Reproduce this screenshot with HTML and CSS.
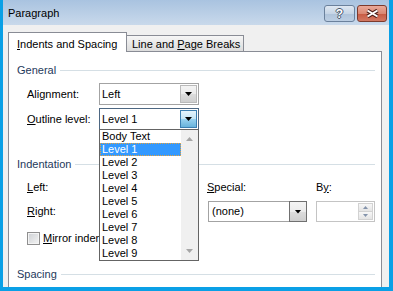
FILE: index.html
```html
<!DOCTYPE html>
<html lang="en">
<head>
  <meta charset="UTF-8">
  <title>Paragraph</title>
  <link rel="stylesheet" href="styles.css">
</head>
<body>
  <div class="window">
    <div class="titlebar">
      <div class="title">Paragraph</div>
      <div class="caption-buttons">
        <div class="cap-btn help">?</div>
        <div class="cap-btn close">
          <svg width="15" height="9" viewBox="0 0 15 9">
            <path d="M2.5 1.5L12.5 7.5M12.5 1.5L2.5 7.5" stroke="#4b1d16" stroke-width="4" fill="none"/>
            <path d="M2.5 1.5L12.5 7.5M12.5 1.5L2.5 7.5" stroke="#fff" stroke-width="2" fill="none"/>
          </svg>
        </div>
      </div>
    </div>

    <div class="client">
      <div class="tabs">
        <div class="tab active"><u>I</u>ndents and Spacing</div>
        <div class="tab inactive">Line and <u>P</u>age Breaks</div>
      </div>

      <div class="panel">
        <div class="group-head">General</div>

        <div class="field-row first">
          <div class="field-label">Ali<u>g</u>nment:</div>
          <div class="combo">
            <span class="combo-text">Left</span>
            <span class="combo-btn"><i class="tri"></i></span>
          </div>
        </div>

        <div class="field-row">
          <div class="field-label"><u>O</u>utline level:</div>
          <div class="combo focused open">
            <span class="combo-text">Level 1</span>
            <span class="combo-btn"><i class="tri"></i></span>
            <ul class="dropdown">
              <li>Body Text</li>
              <li class="selected">Level 1</li>
              <li>Level 2</li>
              <li>Level 3</li>
              <li>Level 4</li>
              <li>Level 5</li>
              <li>Level 6</li>
              <li>Level 7</li>
              <li>Level 8</li>
              <li>Level 9</li>
              <div class="scrollbar">
                <span class="arrow up"></span>
                <span class="arrow down"></span>
              </div>
            </ul>
          </div>
        </div>

        <div class="group-head indent-head">Indentation</div>

        <div class="indent-grid">
          <div class="lbl"><u>L</u>eft:</div>
          <div class="lbl"><u>S</u>pecial:</div>
          <div class="lbl">B<u>y</u>:</div>
          <div class="lbl"><u>R</u>ight:</div>
          <div class="combo special-combo">
            <span class="combo-text">(none)</span>
            <span class="combo-btn"><i class="tri"></i></span>
          </div>
          <div class="spinner">
            <div class="spin">
              <span><i class="spin-up"></i></span>
              <span><i class="spin-down"></i></span>
            </div>
          </div>
        </div>

        <div class="check-row">
          <span class="checkbox"></span>
          <span><u>M</u>irror indents</span>
        </div>

        <div class="group-head spacing-head">Spacing</div>
      </div>
    </div>
  </div>
</body>
</html>
```

FILE: styles.css
```css
body {
  margin: 0;
  width: 393px;
  height: 291px;
  overflow: hidden;
  background-color: #0aa0e6;
  font-family: "Liberation Sans", Arial, sans-serif;
  font-size: 11px;
  color: #000;
}

.window {
  margin: 0 4px 0 3px;
  height: 287px;
  background-color: #f0f0f0;
  overflow: hidden;
}

/* barra de titulo */
.titlebar {
  height: 25px;
  display: flex;
  align-items: flex-start;
  background: linear-gradient(#a9c3e0, #c9d9eb);
}

.title {
  flex: 1;
  padding: 7px 0 0 5px;
  line-height: 13px;
}

.caption-buttons {
  display: flex;
  gap: 2px;
  margin: 5px 2px 0 0;
}

.cap-btn {
  height: 17px;
  box-sizing: border-box;
  border-radius: 3px;
  display: flex;
  align-items: center;
  justify-content: center;
}

.help {
  width: 31px;
  border: 1px solid #6b819c;
  background: linear-gradient(#dfe8f2, #c6d5e6 50%, #afc3da 51%, #bccee3);
  color: #fff;
  font-weight: bold;
  font-size: 12px;
  line-height: 12px;
  text-shadow: -1px 0 #45566b, 1px 0 #45566b, 0 -1px #45566b, 0 1px #45566b;
}

.close {
  width: 30px;
  border: 1px solid #7d3a2c;
  background: linear-gradient(#eaa999, #da8873 50%, #c75a42 51%, #d27862);
}

/* pestañas */
.client {
  padding: 7px 7px 0 5px;
}

.tabs {
  display: flex;
  align-items: flex-end;
  height: 20px;
  margin-bottom: -1px;
  position: relative;
  z-index: 1;
}

.tab {
  box-sizing: border-box;
  border: 1px solid #898c95;
  border-bottom: none;
  white-space: nowrap;
  line-height: 13px;
}

.tab.active {
  width: 119px;
  height: 20px;
  padding: 5px 0 0 8px;
  background-color: #fff;
}

.tab.inactive {
  width: 117px;
  height: 16px;
  margin-bottom: 1px;
  border-left: none;
  padding: 2px 0 0 5px;
  background: linear-gradient(#f6f6f6, #dcdcdc);
}

.panel {
  box-sizing: border-box;
  width: 374px;
  height: 236px;
  border: 1px solid #898c95;
  border-bottom: none;
  background-color: #fff;
  padding: 12px 6px 0 8px;
}

.group-head {
  display: flex;
  align-items: center;
  height: 13px;
  line-height: 13px;
  color: #1e395b;
}

.group-head::after {
  content: "";
  flex: 1;
  height: 1px;
  margin-left: 4px;
  background-color: #d5dfe5;
}

.indent-head {
  margin-top: 28px;
}

.spacing-head {
  margin-top: 23px;
}

/* filas de campos */
.field-row {
  display: flex;
  align-items: center;
  margin: 3px 0 0 10px;
}

.field-row.first {
  margin-top: 6px;
}

.field-label {
  width: 72px;
  line-height: 13px;
}

.combo {
  position: relative;
  box-sizing: border-box;
  width: 100px;
  height: 22px;
  padding: 1px;
  border: 1px solid #a3a3a3;
  background-color: #fff;
  display: flex;
}

.combo-text {
  flex: 1;
  padding-left: 1px;
  line-height: 18px;
}

.combo-btn {
  width: 17px;
  box-sizing: border-box;
  border: 1px solid #bababa;
  background: linear-gradient(#f4f4f4, #ebebeb 50%, #dddddd 51%, #cfcfcf);
  display: flex;
  align-items: center;
  justify-content: center;
}

.tri {
  width: 7px;
  height: 4px;
  background-color: #000;
  clip-path: polygon(0 0, 100% 0, 50% 100%);
}

.combo.focused {
  border-color: #4d6782;
}

.combo.focused .combo-btn {
  border-color: #3c7fb1;
  background: linear-gradient(#e5f4fc, #c4e5f6 50%, #98d1ef 51%, #68b3db);
}

.combo.open {
  z-index: 5;
}

/* lista desplegable */
.dropdown {
  position: absolute;
  left: -1px;
  top: 100%;
  width: 100px;
  box-sizing: border-box;
  margin: 0;
  padding: 0 17px 0 0;
  list-style: none;
  border: 1px solid #646464;
  background-color: #fff;
}

.dropdown li {
  height: 13px;
  line-height: 13px;
  padding-left: 2px;
  white-space: nowrap;
}

.dropdown li.selected {
  background-color: #3399ff;
  color: #fff;
  outline: 1px dotted #e8a33c;
  outline-offset: -1px;
}

.scrollbar {
  position: absolute;
  top: 0;
  right: 0;
  bottom: 0;
  width: 17px;
  background-color: #f0f0f0;
}

.arrow {
  position: absolute;
  left: 5px;
  width: 7px;
  height: 4px;
  background-color: #a6a6a6;
}

.arrow.up {
  top: 7px;
  clip-path: polygon(50% 0, 100% 100%, 0 100%);
}

.arrow.down {
  bottom: 7px;
  clip-path: polygon(0 0, 100% 0, 50% 100%);
}

/* sangria */
.indent-grid {
  display: grid;
  grid-template-columns: 180px 109px 59px;
  grid-template-rows: 13px 21px;
  row-gap: 7px;
  margin: 10px 0 0 10px;
  line-height: 13px;
}

.lbl {
  align-self: center;
}

.special-combo {
  width: 99px;
  height: 21px;
  margin-left: 1px;
  padding: 0;
}

.special-combo .combo-text {
  padding-left: 3px;
  line-height: 19px;
}

.special-combo .combo-btn {
  width: 18px;
  margin: -1px -1px -1px 0;
  border-color: #707070;
}

.spinner {
  box-sizing: border-box;
  width: 59px;
  height: 21px;
  padding: 1px 1px 1px 0;
  border: 1px solid #c4c4c4;
  background-color: #fff;
  display: flex;
  justify-content: flex-end;
}

.spin {
  width: 15px;
  display: flex;
  flex-direction: column;
}

.spin span {
  flex: 1;
  border: 1px solid #d2d2d2;
  background: linear-gradient(#f7f7f7, #e4e4e4);
  display: flex;
  align-items: center;
  justify-content: center;
}

.spin span + span {
  border-top: none;
}

.spin i {
  width: 5px;
  height: 3px;
  background-color: #8393ab;
}

.spin-up {
  clip-path: polygon(50% 0, 100% 100%, 0 100%);
}

.spin-down {
  clip-path: polygon(0 0, 100% 0, 50% 100%);
}

.check-row {
  display: flex;
  align-items: center;
  height: 13px;
  margin: 10px 0 0 10px;
  line-height: 13px;
}

.checkbox {
  width: 13px;
  height: 13px;
  box-sizing: border-box;
  margin-right: 3px;
  border: 1px solid #8f8f8f;
  background: linear-gradient(135deg, #cdd0d4, #f4f4f4);
  box-shadow: inset 0 0 0 1px #f4f4f4;
}
```
